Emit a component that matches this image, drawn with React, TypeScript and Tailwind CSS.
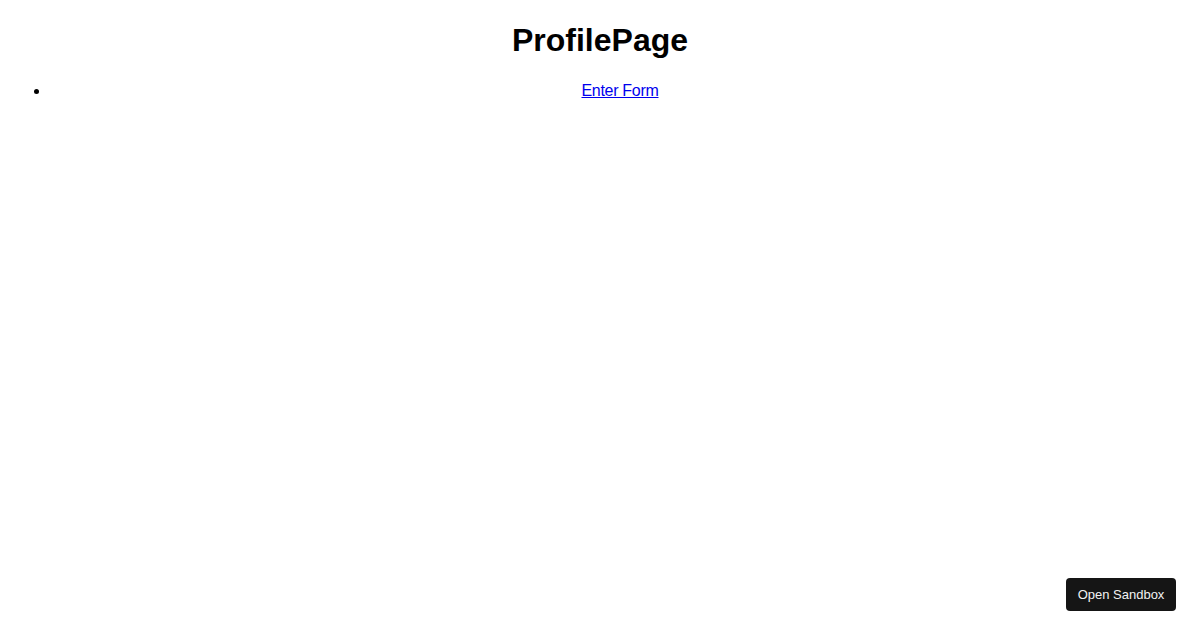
export default function App() {
  return (
    <div className="min-h-screen bg-white text-black font-['Liberation_Sans',Arial,sans-serif]">
      <h1 className="text-center text-[32px] font-bold leading-[37px] pt-[22px] mb-[21px]">ProfilePage</h1>
      <ul className="list-disc pl-[50px] pr-[10px] mt-[23px] text-center text-base leading-[18px]">
        <li>
          <a href="#" className="text-[#0000ee] underline tracking-[-0.3px]">
            Enter Form
          </a>
        </li>
      </ul>
      <button className="fixed bottom-[19px] right-[24px] h-[33px] w-[110px] rounded-[4px] bg-[#151515] text-[#f2f2f2] text-[13px]">
        Open Sandbox
      </button>
    </div>
  );
}
